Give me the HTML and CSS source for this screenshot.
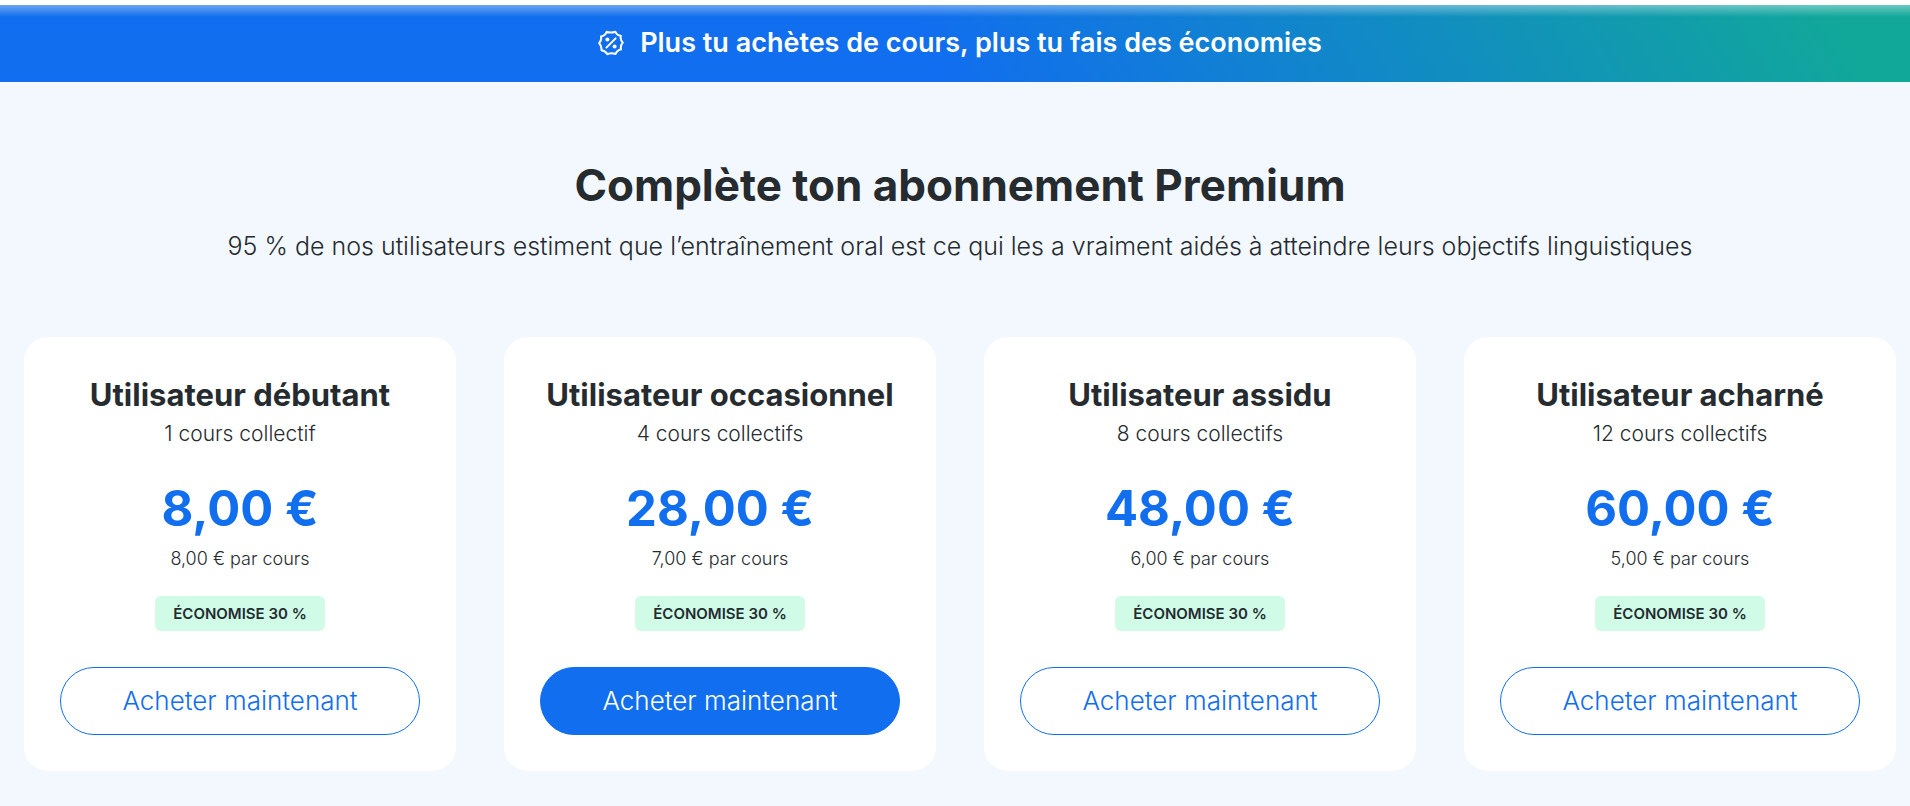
FILE: index.html
```html
<!DOCTYPE html>
<html lang="fr">
	<head>
		<meta charset="utf-8">
		<meta name="viewport" content="width=device-width, initial-scale=1">
		<title>Complète ton abonnement Premium</title>
		<link rel="stylesheet" href="styles.css">
	</head>
	<body>
		<div class="banner">
			<svg class="banner-icon" viewBox="0 0 26 26" aria-hidden="true">
				<path d="M8.6 1.8 Q13 3.4 17.4 1.8 Q18.6 5.4 22.8 5.8 Q22 9.6 24.8 12.6 Q22.2 15.2 23 19.4 Q19.2 19.8 17.6 24 Q13.4 22.4 9.4 24.2 Q7.6 20.8 3.4 20.2 Q4 16.2 1.2 13.2 Q3.8 10.2 3 6.4 Q7.2 5.6 8.6 1.8Z"/>
				<path d="M8.4 17.6L17.6 8.4"/>
				<circle cx="9.4" cy="9.4" r="2"/>
				<circle cx="16.6" cy="16.6" r="2"/>
			</svg>
			<p>Plus tu achètes de cours, plus tu fais des économies</p>
		</div>
		<main class="offers">
			<h1>Complète ton abonnement Premium</h1>
			<p class="intro">95 % de nos utilisateurs estiment que l’entraînement oral est ce qui les a vraiment aidés à atteindre leurs objectifs linguistiques</p>
			<div class="cards">
				<section class="card">
					<h2>Utilisateur débutant</h2>
					<p class="count">1 cours collectif</p>
					<p class="price">8,00 €</p>
					<p class="unit">8,00 € par cours</p>
					<p class="badge">ÉCONOMISE 30 %</p>
					<button type="button">Acheter maintenant</button>
				</section>
				<section class="card">
					<h2>Utilisateur occasionnel</h2>
					<p class="count">4 cours collectifs</p>
					<p class="price">28,00 €</p>
					<p class="unit">7,00 € par cours</p>
					<p class="badge">ÉCONOMISE 30 %</p>
					<button type="button" class="primary">Acheter maintenant</button>
				</section>
				<section class="card">
					<h2>Utilisateur assidu</h2>
					<p class="count">8 cours collectifs</p>
					<p class="price">48,00 €</p>
					<p class="unit">6,00 € par cours</p>
					<p class="badge">ÉCONOMISE 30 %</p>
					<button type="button">Acheter maintenant</button>
				</section>
				<section class="card">
					<h2>Utilisateur acharné</h2>
					<p class="count">12 cours collectifs</p>
					<p class="price">60,00 €</p>
					<p class="unit">5,00 € par cours</p>
					<p class="badge">ÉCONOMISE 30 %</p>
					<button type="button">Acheter maintenant</button>
				</section>
			</div>
		</main>
	</body>
</html>
```
FILE: styles.css
```css
* {box-sizing:border-box;}
body {margin:0;padding-top:5px;background:#fff;color:#252b2f;font-family:Inter, "Liberation Sans", sans-serif;}
h1, h2, p {margin:0;}

.banner {display:flex;justify-content:center;align-items:center;gap:16px;padding:19px 14px 20px 24px;color:#fff;background:linear-gradient(rgba(255,255,255,.38), rgba(255,255,255,0) 12px), linear-gradient(60deg, #116eee 49%, #11a89a 96%);}
.banner p {font-size:27px;line-height:38px;font-weight:600;}
.banner-icon {width:26px;height:26px;fill:none;stroke:#fff;stroke-width:2;stroke-linecap:round;stroke-linejoin:round;}
.banner-icon circle {fill:#fff;stroke:none;}

.offers {padding:71px 14px 35px 24px;background:#f3f8ff;text-align:center;}
.offers h1 {font-size:44px;line-height:64px;font-weight:700;}
.intro {margin-top:13px;font-size:25px;line-height:32px;font-weight:300;}

.cards {display:grid;grid-template-columns:repeat(4, 1fr);gap:48px;margin-top:75px;}
.card {padding:36px;background:#fff;border-radius:24px;}
.card h2 {font-size:31px;line-height:44px;font-weight:700;}
.count {font-size:21px;line-height:34px;font-weight:300;}
.price {margin-top:27px;font-size:49px;line-height:62px;font-weight:700;color:#116eee;}
.unit {margin-top:5px;font-size:18px;line-height:28px;font-weight:300;}
.badge {display:inline-block;margin-top:23px;padding:0 18px;border-radius:6px;background:#cffbe7;font-size:15px;line-height:35px;font-weight:600;}
.card button {display:block;width:100%;height:68px;margin-top:36px;padding:0 0 2px;border:1px solid #116eee;border-radius:34px;background:#fff;color:#116eee;font:300 26px Inter, "Liberation Sans", sans-serif;cursor:pointer;}
.card button.primary {background:#116eee;color:#fff;font-weight:350;}
```
